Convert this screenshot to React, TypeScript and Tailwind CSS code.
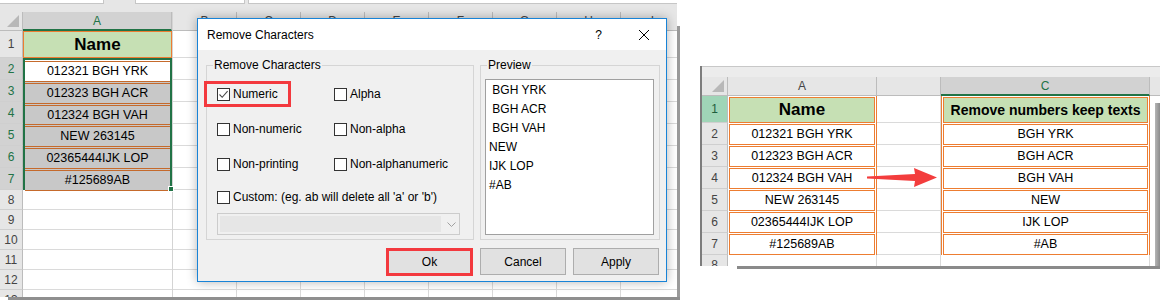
import React from "react";

const font = "font-['Liberation_Sans',Arial,sans-serif]";

const leftRows = [
  "h-[27px]",
  "h-[22px]",
  "h-[22px]",
  "h-[22px]",
  "h-[22px]",
  "h-[22px]",
  "h-[22px]",
  "h-[20px]",
  "h-[20px]",
  "h-[20px]",
  "h-[20px]",
  "h-[20px]",
  "h-[20px]",
];

const rightRows = [
  "h-[27px]",
  "h-[22px]",
  "h-[22px]",
  "h-[22px]",
  "h-[22px]",
  "h-[22px]",
  "h-[22px]",
  "h-[20px]",
];

const names = [
  "012321 BGH YRK",
  "012323 BGH ACR",
  "012324 BGH VAH",
  "NEW 263145",
  "02365444IJK LOP",
  "#125689AB",
];

const results = ["BGH YRK", "BGH ACR", "BGH VAH", "NEW", "IJK LOP", "#AB"];

const previewLines = [" BGH YRK", " BGH ACR", " BGH VAH", "NEW", "IJK LOP", "#AB"];

function Corner({ width }: { width: string }) {
  return (
    <div
      className={`${width} flex h-[19px] shrink-0 items-end justify-end border-b border-r border-[#bcbcbc] bg-[#e6e6e6] pb-[3px] pr-[3px]`}
    >
      <svg width="12" height="12" viewBox="0 0 12 12">
        <path d="M12 0 V12 H0 Z" fill="#b8b8b8" />
      </svg>
    </div>
  );
}

function ColHead({ label, active }: { label: string; active?: boolean }) {
  return (
    <div
      className={
        active
          ? "flex h-[19px] shrink-0 items-center justify-center border-b-2 border-r border-b-[#217346] border-r-[#bcbcbc] bg-[#d2d2d2] text-[12px] text-[#217346]"
          : "flex h-[19px] shrink-0 items-center justify-center border-b border-r border-[#bcbcbc] bg-[#e6e6e6] text-[12px] text-[#444]"
      }
    >
      {label}
    </div>
  );
}

function RowHead({ h, n, tone }: { h: string; n: number; tone: "plain" | "sel" | "green" }) {
  const look =
    tone === "sel"
      ? "bg-[#d2d2d2] text-[#217346]"
      : tone === "green"
        ? "bg-[#9fd5b7] text-[#1e5e3d]"
        : "bg-[#e6e6e6] text-[#444]";
  return (
    <div
      className={`${h} ${look} flex shrink-0 items-center justify-center border-b border-r border-b-[#cfcfcf] border-r-[#bcbcbc] text-[12px]`}
    >
      {n}
    </div>
  );
}

function BlankColumn({ label, rows, width }: { label: string; rows: string[]; width: string }) {
  return (
    <div className={`${width} flex shrink-0 flex-col`}>
      <ColHead label={label} />
      {rows.map((h, i) => (
        <div key={i} className={`${h} shrink-0 border-b border-r border-[#dadada]`} />
      ))}
    </div>
  );
}

function CheckBox({ checked }: { checked?: boolean }) {
  return (
    <span className="flex h-[13px] w-[13px] shrink-0 items-center justify-center border border-[#333] bg-white">
      {checked && (
        <svg width="11" height="11" viewBox="0 0 11 11">
          <path d="M1.5 5.5 L4.2 8.3 L9.6 2.2" fill="none" stroke="#4a4a4a" strokeWidth="1.1" />
        </svg>
      )}
    </span>
  );
}

function Option({ label, checked }: { label: string; checked?: boolean }) {
  return (
    <span className="flex items-center gap-[3px]">
      <CheckBox checked={checked} />
      <span>{label}</span>
    </span>
  );
}

function Dialog() {
  return (
    <div
      className={`${font} absolute left-[197px] top-[18px] flex h-[264px] w-[470px] flex-col border border-[#1883d7] bg-[#f0f0f0] text-[12px] text-black shadow-[0_0_10px_rgba(0,0,0,0.3)]`}
    >
      <div className="flex h-[31px] shrink-0 items-center bg-white pl-[9px] pr-[17px]">
        <span className="flex-1">Remove Characters</span>
        <span className="mr-[37px]">?</span>
        <svg width="10" height="10" viewBox="0 0 10 10">
          <path d="M0 0 L10 10 M10 0 L0 10" stroke="#000" strokeWidth="1" />
        </svg>
      </div>

      <div className="flex flex-1 flex-col pt-[7px]">
        <div className="flex pl-[8px]">
          <fieldset className="h-[183px] w-[268px] min-w-0 border border-[#d5d5d5]">
            <legend className="ml-[6px] px-[1px] leading-[16px]">Remove Characters</legend>
            <div className="flex flex-col pl-[10px]">
              <div className="mt-[11px] flex h-[20px] items-center">
                <div className="w-[117px] shrink-0">
                  <span className="-ml-[13px] flex h-[26px] w-fit items-center gap-[3px] border-[3px] border-[#f3393e] pl-[10px] pr-[10px]">
                    <CheckBox checked />
                    <span>Numeric</span>
                  </span>
                </div>
                <Option label="Alpha" />
              </div>
              <div className="mt-[15px] flex h-[20px] items-center">
                <div className="w-[117px] shrink-0">
                  <Option label="Non-numeric" />
                </div>
                <Option label="Non-alpha" />
              </div>
              <div className="mt-[15px] flex h-[20px] items-center">
                <div className="w-[117px] shrink-0">
                  <Option label="Non-printing" />
                </div>
                <Option label="Non-alphanumeric" />
              </div>
              <div className="mt-[13px] flex h-[20px] items-center">
                <Option label="Custom: (eg. ab will delete all 'a' or 'b')" />
              </div>
              <div className="mt-[6px] flex h-[22px] w-[243px] items-center border border-[#cccccc] bg-[#f0f0f0]">
                <div className="mx-[2px] h-[16px] flex-1 bg-[#e6e6e6]" />
                <div className="flex w-[16px] justify-center">
                  <svg width="9" height="5" viewBox="0 0 9 5">
                    <path d="M0.5 0.5 L4.5 4.5 L8.5 0.5" fill="none" stroke="#a0a0a0" strokeWidth="1" />
                  </svg>
                </div>
              </div>
            </div>
          </fieldset>

          <fieldset className="ml-[6px] h-[183px] w-[180px] min-w-0 border border-[#d5d5d5]">
            <legend className="ml-[6px] px-[1px] leading-[16px]">Preview</legend>
            <div className="ml-[4px] mt-[6px] h-[156px] w-[169px] border border-[#a0a0a0] bg-white pl-[3px] pt-[1px]">
              {previewLines.map((line) => (
                <div key={line} className="whitespace-pre leading-[19px]">
                  {line}
                </div>
              ))}
            </div>
          </fieldset>
        </div>

        <div className="mt-[8px] flex justify-end gap-[7px] pr-[7px]">
          <button className="flex h-[28px] w-[87px] items-center justify-center border-[3px] border-[#f3393e] bg-[#e1e1e1]">
            Ok
          </button>
          <button className="flex h-[27px] w-[86px] items-center justify-center border border-[#adadad] bg-[#e1e1e1]">
            Cancel
          </button>
          <button className="flex h-[27px] w-[86px] items-center justify-center border border-[#adadad] bg-[#e1e1e1]">
            Apply
          </button>
        </div>
      </div>
    </div>
  );
}

function LeftShot() {
  return (
    <div className={`${font} relative flex h-[300px] w-[680px] shrink-0 flex-col`}>
      <div className="flex h-[297px]">
        <div className="flex w-[677px] flex-col overflow-hidden bg-white">
          {/* name box / formula bar strip */}
          <div className="flex h-[4px] shrink-0 bg-[#e6e6e6]">
            <div className="w-[104px] border-b border-r border-[#c6c6c6] bg-white" />
            <div className="ml-[31px] w-[110px] border-b border-x border-[#c6c6c6] bg-white" />
            <div className="ml-[3px] flex-1 border-b border-l border-[#c6c6c6] bg-white" />
          </div>
          <div className="h-[8px] shrink-0 bg-[#e6e6e6]" />

          <div className="flex">
            <div className="flex w-[23px] shrink-0 flex-col">
              <Corner width="w-[23px]" />
              {leftRows.map((h, i) => (
                <RowHead key={i} h={h} n={i + 1} tone={i >= 1 && i <= 6 ? "sel" : "plain"} />
              ))}
            </div>

            <div className="flex w-[150px] shrink-0 flex-col border-r border-[#d4d4d4]">
              <ColHead label="A" active />
              <div className="flex h-[27px] shrink-0 items-center justify-center border border-[#ed7d31] bg-[#c6e0b4] text-[17px] font-bold">
                Name
              </div>
              <div className="relative flex h-[132px] shrink-0 flex-col border-2 border-[#217346]">
                {names.map((t, i) => (
                  <div key={t} className={`flex-1 pt-px ${i === 0 ? "bg-white" : "bg-[#c8c8c8]"}`}>
                    <div className="flex h-full items-center justify-center border-y border-[#c56a2c] text-[12.5px]">
                      {t}
                    </div>
                  </div>
                ))}
                <div className="absolute -bottom-[4px] -right-[4px] h-[6px] w-[6px] border border-white bg-[#217346]" />
              </div>
              {leftRows.slice(7).map((h, i) => (
                <div key={i} className={`${h} shrink-0 border-b border-[#dadada]`} />
              ))}
            </div>

            {["B", "C", "D", "E", "F", "G", "H", "I"].map((c) => (
              <BlankColumn key={c} label={c} rows={leftRows} width="w-[64px]" />
            ))}
          </div>
        </div>
        <div className="mt-[26px] w-[3px] bg-[#9a9a9a]" />
      </div>
      <div className="ml-[8px] h-[3px] bg-[#8f8f8f]" />

      <Dialog />
    </div>
  );
}

function BoxCell({ h, children, head, size }: { h: string; children: React.ReactNode; head?: boolean; size?: string }) {
  return (
    <div className={`${h} shrink-0 px-px pt-px`}>
      <div
        className={`flex h-full items-center justify-center border border-[#ed7d31] ${
          head ? "bg-[#c6e0b4] font-bold" : "bg-white"
        } ${size ?? "text-[12.5px]"}`}
      >
        {children}
      </div>
    </div>
  );
}

function RightShot() {
  return (
    <div className={`${font} relative flex h-[203px] w-[460px] flex-col`}>
      <div className="flex h-[200px]">
        <div className="w-[2px] bg-[#7d7d7d]" />
        <div className="flex flex-1 flex-col overflow-hidden bg-white">
          <div className="h-[11px] shrink-0 border-t border-[#c8c8c8] bg-[#ececec]" />
          <div className="flex">
            <div className="flex w-[26px] shrink-0 flex-col">
              <Corner width="w-[26px]" />
              {rightRows.map((h, i) => (
                <RowHead key={i} h={h} n={i + 1} tone={i === 0 ? "green" : "plain"} />
              ))}
            </div>

            <div className="flex w-[149px] shrink-0 flex-col">
              <ColHead label="A" />
              <div className="flex flex-col border-r border-[#ed7d31]">
                <BoxCell h="h-[27px]" head size="text-[17px]">
                  Name
                </BoxCell>
                {names.map((t) => (
                  <BoxCell key={t} h="h-[22px]">
                    {t}
                  </BoxCell>
                ))}
              </div>
              <div className="h-[20px] shrink-0 border-b border-r border-[#dadada]" />
            </div>

            <BlankColumn label="" rows={rightRows} width="w-[64px]" />

            <div className="flex w-[209px] shrink-0 flex-col">
              <ColHead label="C" active />
              <div className="flex flex-col border-x border-[#ed7d31]">
                <BoxCell h="h-[27px]" head size="text-[14px]">
                  Remove numbers keep texts
                </BoxCell>
                {results.map((t) => (
                  <BoxCell key={t} h="h-[22px]">
                    {t}
                  </BoxCell>
                ))}
              </div>
              <div className="h-[20px] shrink-0 border-b border-r border-[#dadada]" />
            </div>

            <div className="flex flex-1 flex-col">
              <div className="h-[19px] shrink-0 border-b border-[#bcbcbc] bg-[#e6e6e6]" />
              <div className="flex flex-1">
                <div className="w-[5px]" />
                <div className="mt-[7px] flex-1 bg-gradient-to-r from-[#b5b5b5] to-[#8c8c8c]" />
              </div>
            </div>
          </div>
        </div>
      </div>
      <div className="ml-[37px] h-[3px] bg-[#8a8a8a]" />

      <svg className="absolute left-[166px] top-[100px]" width="72" height="22" viewBox="0 0 72 22">
        <polygon points="1,10.5 49,8 48,2 71,11.5 48,21 49,15 1,12.5" fill="#f33d3d" />
      </svg>
    </div>
  );
}

export default function App() {
  return (
    <div className="flex h-[304px] w-[1160px] overflow-hidden bg-white">
      <LeftShot />
      <div className="ml-[20px] mt-[66px]">
        <RightShot />
      </div>
    </div>
  );
}
